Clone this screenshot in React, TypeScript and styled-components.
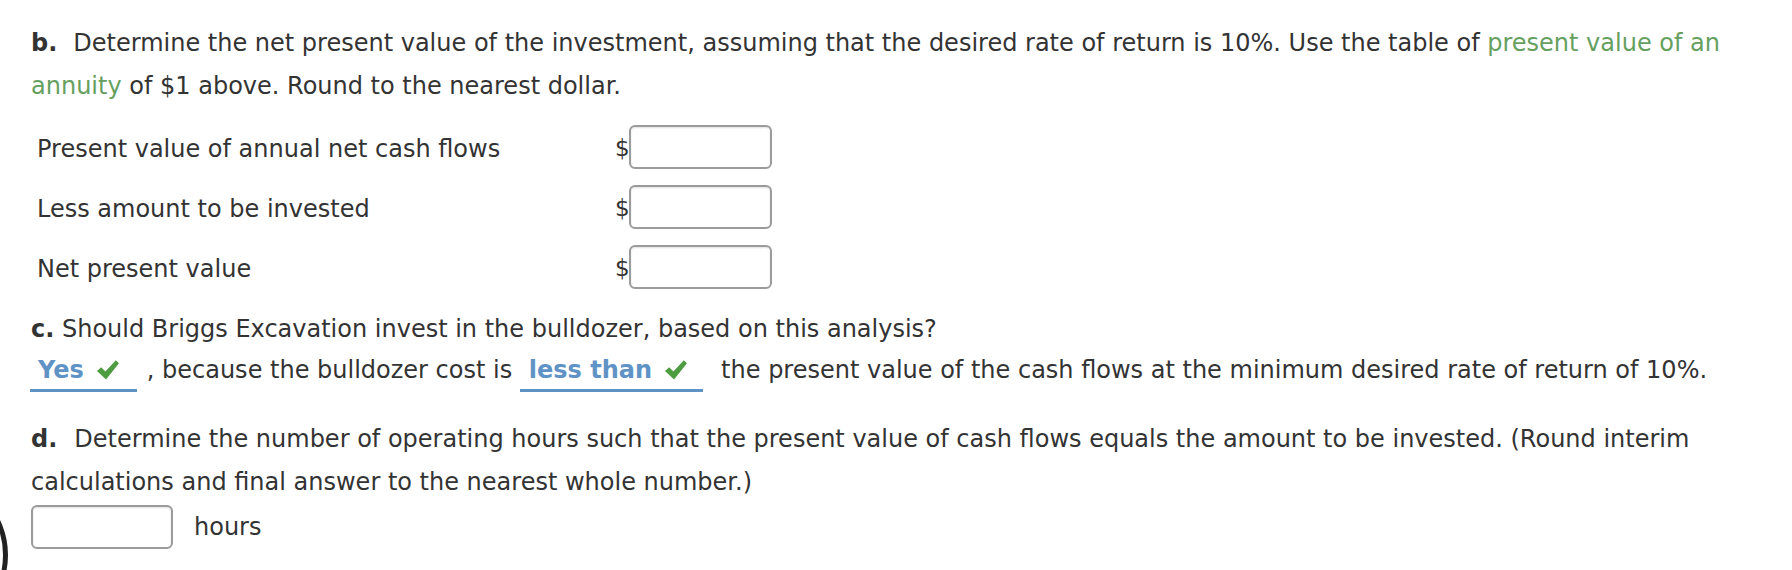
import styled, { createGlobalStyle } from 'styled-components';

const GlobalStyle = createGlobalStyle`
  html, body {
    margin: 0;
    padding: 0;
    background: #fff;
  }
  body {
    font-family: "DejaVu Sans", Verdana, sans-serif;
    font-size: 24px;
    color: #333;
  }
`;

const Page = styled.div`
  position: relative;
  width: 1792px;
  height: 570px;
  overflow: hidden;
  padding: 22px 0 0 31px;
  box-sizing: border-box;
`;

const Para = styled.div<{ $mt?: number }>`
  line-height: 43px;
  margin-top: ${p => p.$mt || 0}px;
  white-space: nowrap;
`;

const Label = styled.b<{ $gap?: number }>`
  font-weight: bold;
  margin-right: ${p => p.$gap || 0}px;
`;

const Link = styled.span`
  color: #66a05f;
`;

const Rows = styled.div`
  display: flex;
  flex-direction: column;
  gap: 16px;
  margin-top: 17px;
  padding-left: 6px;
`;

const Row = styled.div`
  display: grid;
  grid-template-columns: 578px 14px 143px;
  align-items: center;
  height: 44px;
`;

const RowLabel = styled.span`
  padding-top: 4px;
`;

const Dollar = styled.span`
  padding-top: 2px;
  font-size: 23px;
`;

const Input = styled.div<{ $w?: number }>`
  width: ${p => p.$w || 143}px;
  height: 44px;
  box-sizing: border-box;
  border: 2px solid #9b9b9b;
  border-radius: 6px;
  background: #fff;
  box-shadow: inset 0 1px 2px rgba(0, 0, 0, 0.12);
`;

const AnswerLine = styled.div`
  display: flex;
  align-items: flex-start;
  line-height: 38px;
  white-space: pre;
`;

const Select = styled.span<{ $pl: number; $pr: number; $ml: number; $mr: number }>`
  display: inline-flex;
  align-items: center;
  gap: 13px;
  height: 38px;
  padding: 0 ${p => p.$pr}px 0 ${p => p.$pl}px;
  margin: 0 ${p => p.$mr}px 0 ${p => p.$ml}px;
  border-bottom: 3px solid #5f93c6;
  color: #5f93c6;
  font-weight: bold;
`;

const HoursRow = styled.div`
  display: flex;
  align-items: center;
  gap: 21px;
  height: 45px;
`;

const Ring = styled.div`
  position: absolute;
  left: -152px;
  top: 475px;
  width: 160px;
  height: 160px;
  box-sizing: border-box;
  border: 5px solid #222;
  border-radius: 50%;
`;

const Check = () => (
  <svg width="22" height="20" viewBox="0 0 22 20">
    <path d="M0 11 L4.2 7.2 L8.4 11.4 L18.8 0.2 L22 3.2 L9 19.6 Z" fill="#4d9c40" />
  </svg>
);

export default function App() {
  return (
    <>
      <GlobalStyle />
      <Page>
        <Para>
          <Label $gap={16}>b.</Label>Determine the net present value of the investment, assuming that the desired rate of return is 10%. Use the table of <Link>present value of an</Link>
          <br />
          <Link>annuity</Link> of $1 above. Round to the nearest dollar.
        </Para>
        <Rows>
          <Row>
            <RowLabel>Present value of annual net cash flows</RowLabel>
            <Dollar>$</Dollar>
            <Input />
          </Row>
          <Row>
            <RowLabel>Less amount to be invested</RowLabel>
            <Dollar>$</Dollar>
            <Input />
          </Row>
          <Row>
            <RowLabel>Net present value</RowLabel>
            <Dollar>$</Dollar>
            <Input />
          </Row>
        </Rows>
        <Para $mt={19}>
          <Label>c.</Label> Should Briggs Excavation invest in the bulldozer, based on this analysis?
        </Para>
        <AnswerLine>
          <Select $pl={8} $pr={18} $ml={-1} $mr={10}>Yes<Check /></Select>
          <span>, because the bulldozer cost is </span>
          <Select $pl={9} $pr={16} $ml={0} $mr={18}>less than<Check /></Select>
          <span>the present value of the cash flows at the minimum desired rate of return of 10%.</span>
        </AnswerLine>
        <Para $mt={26}>
          <Label $gap={17}>d.</Label>Determine the number of operating hours such that the present value of cash flows equals the amount to be invested. (Round interim
          <br />
          calculations and final answer to the nearest whole number.)
        </Para>
        <HoursRow>
          <Input $w={142} />
          <span>hours</span>
        </HoursRow>
        <Ring />
      </Page>
    </>
  );
}
